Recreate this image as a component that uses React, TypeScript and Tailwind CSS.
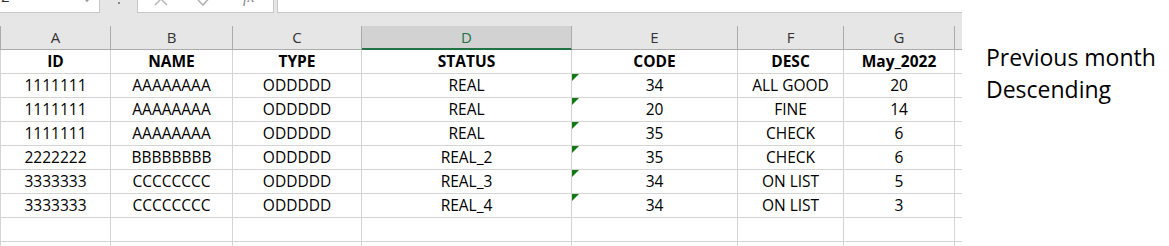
import React from "react";

type Col = { letter: string; width: string; last?: boolean };

const columns: Col[] = [
  { letter: "A", width: "w-[110px]" },
  { letter: "B", width: "w-[122px]" },
  { letter: "C", width: "w-[129px]" },
  { letter: "D", width: "w-[210px]" },
  { letter: "E", width: "w-[166px]" },
  { letter: "F", width: "w-[106px]" },
  { letter: "G", width: "w-[111px]" },
  { letter: "H", width: "w-[7px]", last: true },
];

const header = ["ID", "NAME", "TYPE", "STATUS", "CODE", "DESC", "May_2022", ""];

const rows: string[][] = [
  ["1111111", "AAAAAAAA", "ODDDDD", "REAL", "34", "ALL GOOD", "20", ""],
  ["1111111", "AAAAAAAA", "ODDDDD", "REAL", "20", "FINE", "14", ""],
  ["1111111", "AAAAAAAA", "ODDDDD", "REAL", "35", "CHECK", "6", ""],
  ["2222222", "BBBBBBBB", "ODDDDD", "REAL_2", "35", "CHECK", "6", ""],
  ["3333333", "CCCCCCCC", "ODDDDD", "REAL_3", "34", "ON LIST", "5", ""],
  ["3333333", "CCCCCCCC", "ODDDDD", "REAL_4", "34", "ON LIST", "3", ""],
  ["", "", "", "", "", "", "", ""],
  ["", "", "", "", "", "", "", ""],
];

const FormulaBar = () => (
  <div className="flex h-[13px] shrink-0 bg-[#e6e6e6]">
    <div className="relative w-[100px] overflow-hidden border-r border-b border-[#c6c6c6] bg-white">
      <span className="block -mt-[12px] pl-[1px] text-[15px] leading-[16px] text-[#333]">2</span>
      <svg className="absolute right-[8px] top-0" width="8" height="3" viewBox="0 3 8 3">
        <path d="M1 1 L4 4.5 L7 1" stroke="#666" strokeWidth="1" fill="none" />
      </svg>
    </div>
    <div className="flex w-[37px] justify-center pt-[2px]">
      <div className="h-[2px] w-[2px] bg-[#8a8a8a]" />
    </div>
    <div className="flex w-[137px] items-start overflow-hidden border-x border-b border-[#c6c6c6] bg-white">
      <svg className="ml-[15px]" width="16" height="7" viewBox="0 9 16 7">
        <path d="M2 2 L14 14 M14 2 L2 14" stroke="#b4b4b4" strokeWidth="1.4" fill="none" />
      </svg>
      <svg className="ml-[28px]" width="16" height="7" viewBox="0 9 16 7">
        <path d="M1 9 L6 14 L15 4" stroke="#b4b4b4" strokeWidth="1.6" fill="none" />
      </svg>
      <span className="ml-[30px] -mt-[11px] font-['Liberation_Serif',serif] text-[16px] italic leading-[16px] text-[#8c8c8c]">
        fx
      </span>
    </div>
    <div className="w-[3px]" />
    <div className="flex-1 border-l border-b border-[#c6c6c6] bg-white" />
  </div>
);

const ColumnHeaders = () => (
  <div className="flex h-[24px] shrink-0 border-l border-[#ababab] bg-[#e6e6e6]">
    {columns.map((c) => {
      const selected = c.letter === "D";
      return (
        <div
          key={c.letter}
          className={`${c.width} flex shrink-0 items-center justify-center text-[15px] ${
            c.last ? "" : "border-r border-[#ababab]"
          } ${
            selected
              ? "border-b-2 border-b-[#217346] bg-[#d2d2d2] text-[#217346]"
              : "border-b border-b-[#ababab] text-[#333]"
          }`}
        >
          {c.last ? "" : c.letter}
        </div>
      );
    })}
  </div>
);

const Row = ({ cells, bold, flagged }: { cells: string[]; bold?: boolean; flagged?: boolean }) => (
  <div className="flex h-[24px] shrink-0 border-l border-[#d4d4d4]">
    {columns.map((c, i) => (
      <div
        key={c.letter}
        className={`${c.width} relative flex shrink-0 items-center justify-center border-b border-[#d4d4d4] text-[15.5px] leading-[23px] text-black ${
          c.last ? "" : "border-r"
        } ${bold ? "font-bold" : ""}`}
      >
        {flagged && c.letter === "E" && (
          <span className="absolute left-0 top-0 h-0 w-0 border-t-[7px] border-r-[7px] border-t-[#127812] border-r-transparent" />
        )}
        {cells[i]}
      </div>
    ))}
  </div>
);

export default function App() {
  return (
    <div className="flex h-[246px] w-[1169px] overflow-hidden bg-white font-['Open_Sans',sans-serif]">
      <div className="flex w-[962px] shrink-0 flex-col">
        <FormulaBar />
        <div className="h-[13px] shrink-0 bg-[#e6e6e6]" />
        <ColumnHeaders />
        <Row cells={header} bold />
        {rows.map((r, i) => (
          <Row key={i} cells={r} flagged={i < 6} />
        ))}
      </div>
      <div className="pl-[24px] pt-[41px] text-[23px] leading-[32px] text-black">
        <p>Previous month</p>
        <p>Descending</p>
      </div>
    </div>
  );
}
